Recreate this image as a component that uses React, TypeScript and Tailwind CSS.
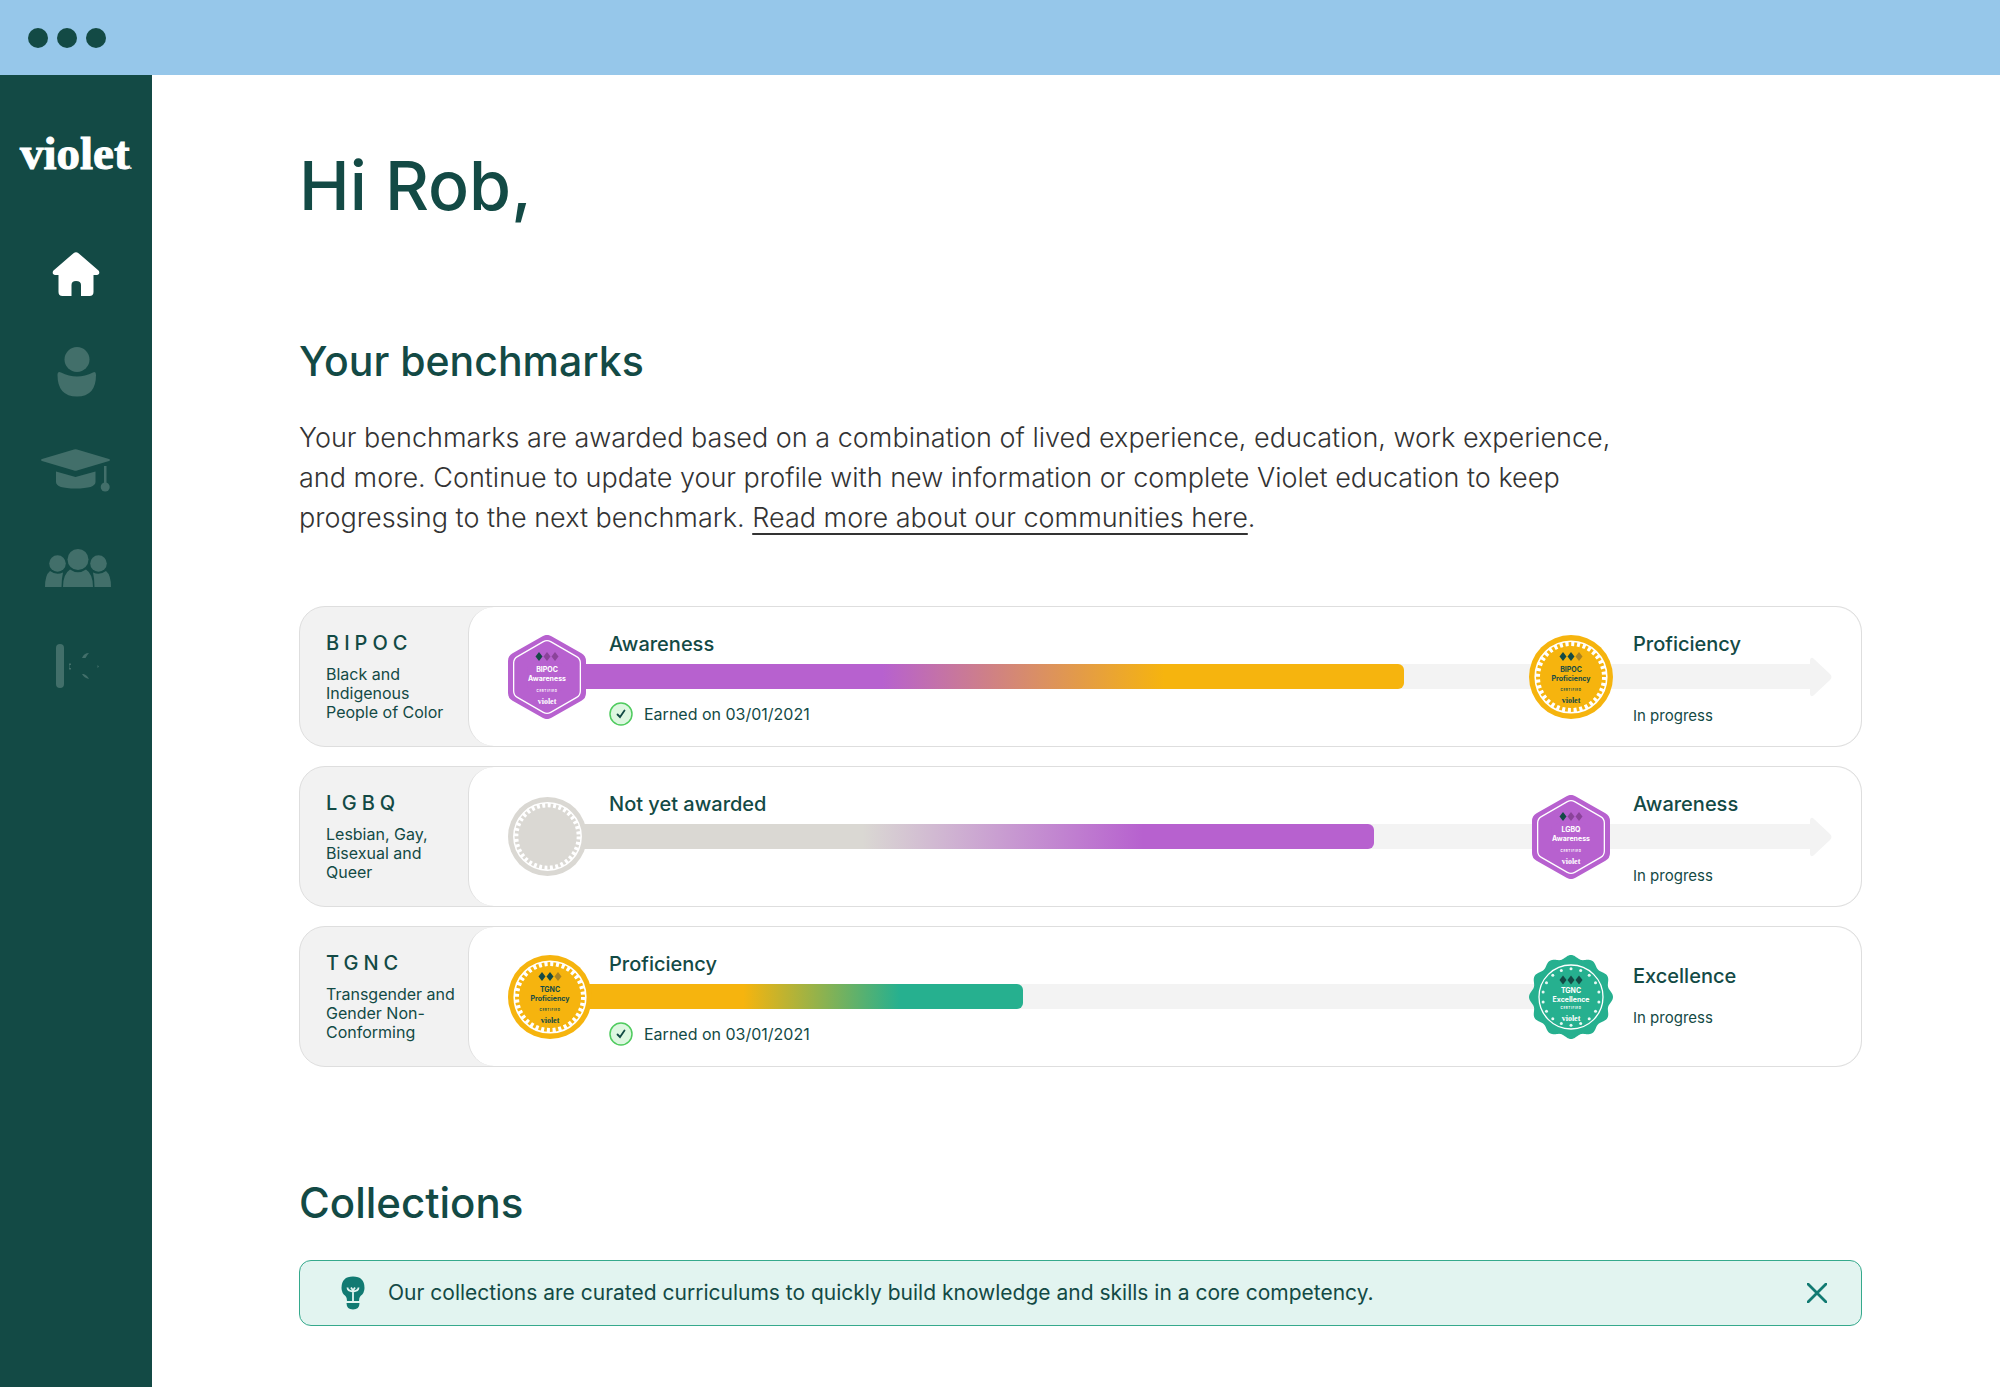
import type { ReactNode } from "react";

const sans = "font-['Inter','Liberation_Sans',sans-serif]";

type BadgeInfo = { kind: "awareness" | "proficiency" | "excellence" | "empty"; code?: string; label?: string };

type Row = {
  code: string;
  name: string;
  from: BadgeInfo;
  fromLabel: string;
  earned?: string;
  to: BadgeInfo;
  toLabel: string;
  progress: number;
  gradient: string;
  arrow: boolean;
};

const rows: Row[] = [
  {
    code: "BIPOC",
    name: "Black and Indigenous People of Color",
    from: { kind: "awareness", code: "BIPOC", label: "Awareness" },
    fromLabel: "Awareness",
    earned: "Earned on 03/01/2021",
    to: { kind: "proficiency", code: "BIPOC", label: "Proficiency" },
    toLabel: "Proficiency",
    progress: 67.8,
    gradient: "bg-[linear-gradient(90deg,#b761cf_39%,#f6b40e_72%)]",
    arrow: true,
  },
  {
    code: "LGBQ",
    name: "Lesbian, Gay, Bisexual and Queer",
    from: { kind: "empty" },
    fromLabel: "Not yet awarded",
    to: { kind: "awareness", code: "LGBQ", label: "Awareness" },
    toLabel: "Awareness",
    progress: 65.4,
    gradient: "bg-[linear-gradient(90deg,#dad8d3_38%,#b761cf_72%)]",
    arrow: true,
  },
  {
    code: "TGNC",
    name: "Transgender and Gender Non-Conforming",
    from: { kind: "proficiency", code: "TGNC", label: "Proficiency" },
    fromLabel: "Proficiency",
    earned: "Earned on 03/01/2021",
    to: { kind: "excellence", code: "TGNC", label: "Excellence" },
    toLabel: "Excellence",
    progress: 46.4,
    gradient: "bg-[linear-gradient(90deg,#f6b40e_41%,#26b08f_74%)]",
    arrow: false,
  },
];

function Diamonds({ y, colors }: { y: number; colors: string[] }) {
  return (
    <>
      {colors.map((c, i) => {
        const x = 34 + i * 8;
        return <path key={i} d={`M${x} ${y - 4.5}L${x + 3.5} ${y}L${x} ${y + 4.5}L${x - 3.5} ${y}Z`} fill={c} />;
      })}
    </>
  );
}

function BadgeText({
  code,
  label,
  color,
  y,
  footer,
}: {
  code?: string;
  label?: string;
  color: string;
  y: number;
  footer: number;
}) {
  return (
    <g fill={color} textAnchor="middle" fontFamily="Inter, sans-serif" fontWeight="700">
      <text x="42" y={y} fontSize="7">{code}</text>
      <text x="42" y={y + 9} fontSize="7">{label}</text>
      <text x="42" y={footer - 12} fontSize="3" letterSpacing="0.6">CERTIFIED</text>
      <text x="42" y={footer} fontSize="8" fontFamily="'Liberation Serif', serif">violet</text>
    </g>
  );
}

function Badge({ kind, code, label }: BadgeInfo) {
  if (kind === "awareness") {
    const inner = "M42 13L68 28V56L42 71L16 56V28Z";
    return (
      <svg viewBox="3 0 78 84" className="h-[84px] w-[78px]" role="img" aria-label={`${code} ${label}`}>
        <path d="M42 9L72 26V58L42 75L12 58V26Z" fill="#b761cf" stroke="#b761cf" strokeWidth="18" strokeLinejoin="round" />
        <path d={inner} fill="#b761cf" stroke="#fff" strokeWidth="16" strokeLinejoin="round" />
        <path d={inner} fill="#b761cf" stroke="#b761cf" strokeWidth="13.4" strokeLinejoin="round" />
        <Diamonds y={21.5} colors={["#134a45", "#8a4399", "#8a4399"]} />
        <BadgeText code={code} label={label} color="#fff" y={37} footer={69} />
      </svg>
    );
  }
  if (kind === "excellence") {
    const pts: string[] = [];
    for (let i = 0; i < 240; i++) {
      const a = (i / 240) * Math.PI * 2;
      const r = 40.2 + 1.8 * Math.cos(a * 12);
      pts.push(`${(42 + r * Math.sin(a)).toFixed(2)},${(42 - r * Math.cos(a)).toFixed(2)}`);
    }
    return (
      <svg viewBox="0 0 84 84" className="size-[84px]" role="img" aria-label={`${code} ${label}`}>
        <polygon points={pts.join(" ")} fill="#26b08f" />
        <circle cx="42" cy="42" r="32" fill="none" stroke="#fff" strokeWidth="1.3" />
        {Array.from({ length: 18 }, (_, i) => {
          const a = (i / 18) * Math.PI * 2;
          return <circle key={i} cx={42 + 28.3 * Math.sin(a)} cy={42 - 28.3 * Math.cos(a)} r="1.5" fill="#e8f8f3" />;
        })}
        <Diamonds y={25} colors={["#134a45", "#134a45", "#134a45"]} />
        <BadgeText code={code} label={label} color="#fff" y={38} footer={66} />
      </svg>
    );
  }
  const empty = kind === "empty";
  const color = empty ? "#dad8d3" : "#f6b40e";
  return (
    <svg
      viewBox="0 0 84 84"
      className={empty ? "size-[79px]" : "size-[84px]"}
      role="img"
      aria-label={empty ? "No badge" : `${code} ${label}`}
    >
      <circle cx="42" cy="42" r="42" fill={color} />
      <circle cx="42" cy="42" r="35.8" fill="none" stroke="#fff" strokeWidth="1.6" />
      <circle cx="42" cy="42" r="33.3" fill="none" stroke="#fff" strokeWidth="4.6" strokeDasharray="3.1 2.712" />
      {kind === "proficiency" && (
        <>
          <Diamonds y={21.5} colors={["#134a45", "#134a45", "#a88222"]} />
          <BadgeText code={code} label={label} color="#134a45" y={37} footer={68} />
        </>
      )}
    </svg>
  );
}

function BenchmarkRow({ row }: { row: Row }) {
  return (
    <li className="flex min-h-[141px] overflow-hidden rounded-[26px] border border-[#dedede] bg-[#f2f2f2]">
      <div className="flex w-[168px] shrink-0 flex-col justify-center gap-[10px] pl-[26px]">
        <h3 className="text-[20px] leading-6 font-medium tracking-[0.25em]">{row.code}</h3>
        <p className="w-[130px] text-[16px] leading-[19px]">{row.name}</p>
      </div>
      <div className="grid flex-1 rounded-[26px] border-l border-[#dedede] bg-white">
        <div className={`col-start-1 row-start-1 flex items-center pl-20 ${row.arrow ? "pr-[29px]" : "pr-[290px]"}`}>
          <div className="h-[25px] flex-1 bg-[#f3f3f3]">
            <div className={`h-full rounded-r-md ${row.gradient}`} style={{ width: `${row.progress}%` }} />
          </div>
          {row.arrow && (
            <svg viewBox="0 0 22 40" className="h-10 w-[22px]" aria-hidden="true">
              <path d="M0 3Q1 -1 4 2L20 17Q23 20 20 23L4 38Q1 41 0 37Z" fill="#f3f3f3" />
            </svg>
          )}
        </div>
        <div className="col-start-1 row-start-1 grid grid-cols-[101px_1fr_104px_228px] pl-[39px]">
          <div className="flex items-center">
            <Badge {...row.from} />
          </div>
          <div className="flex flex-col gap-[46px] pt-[25px]">
            <p className="text-[20px] leading-6 font-medium">{row.fromLabel}</p>
            {row.earned && (
              <p className="flex items-center gap-[11px] text-[16px] leading-6">
                <svg viewBox="0 0 24 24" className="size-6" fill="none" aria-hidden="true">
                  <circle cx="12" cy="12" r="11" fill="#ddf7e0" stroke="#4fcb5e" strokeWidth="1.5" />
                  <path d="M8.500 12.500L11 15L15.500 8.500" stroke="#134a45" strokeWidth="1.8" strokeLinecap="round" />
                </svg>
                {row.earned}
              </p>
            )}
          </div>
          <div className="flex w-[84px] items-center justify-center">
            <Badge {...row.to} />
          </div>
          <div className={row.arrow ? "flex flex-col gap-[48px] pt-[25px]" : "flex flex-col gap-[18px] pt-[37px]"}>
            <p className="text-[20px] leading-6 font-medium">{row.toLabel}</p>
            <p className="text-[15px] leading-6">In progress</p>
          </div>
        </div>
      </div>
    </li>
  );
}

function NavItem({ label, children }: { label: string; children: ReactNode }) {
  return (
    <a href="#" aria-label={label} className="flex h-[98px] w-full items-center justify-center">
      {children}
    </a>
  );
}

function Sidebar() {
  return (
    <aside className="flex w-[152px] shrink-0 flex-col items-center bg-[#134a45] pt-[51px]">
      <a
        href="#"
        className="font-['Liberation_Serif',serif] text-[47px] leading-[54px] font-bold text-white [-webkit-text-stroke:1px_white]"
      >
        violet<span className="text-[10px] [-webkit-text-stroke:0]">.</span>
      </a>
      <nav className="mt-8 flex w-full flex-col text-[#426f6a]">
        <NavItem label="Home">
          <svg viewBox="0 0 48 44" className="h-11 w-12" fill="#fff">
            <path d="M21.5 1.2Q24 -0.8 26.5 1.2L46.5 18.5Q47.8 20 47 21.8Q46.3 23 44.5 23H41.500V40Q41.500 44 37.500 44H29V33Q29 29 24 29Q19.500 29 19.500 33V44H10.500Q6.500 44 6.500 40V23H3.500Q1.700 23 1 21.800Q0.200 20 1.500 18.500Z" />
          </svg>
        </NavItem>
        <NavItem label="Profile">
          <svg viewBox="0 0 40 50" className="h-[50px] w-10" fill="currentColor">
            <circle cx="21" cy="12.500" r="12.500" />
            <path d="M1.500 28Q1.500 24 5 25.500Q13 29.500 21 29.500Q29 29.500 37 25.500Q40 24 40 28Q40 49.500 21 49.500Q1.500 49.500 1.500 28Z" />
          </svg>
        </NavItem>
        <NavItem label="Education">
          <svg viewBox="0 0 70 43" className="h-[43px] w-[70px]" fill="currentColor">
            <path d="M33 0.500Q34.500 0 36 0.500L68 10Q70 11 68 12L36 21.500Q34.500 22 33 21.500L1 12Q-1 11 1 10Z" />
            <path d="M15 22.500L34.500 28L54.500 22.500V33Q54.500 39.500 34.500 39.500Q15 39.500 15 33Z" />
            <rect x="63" y="17" width="2.500" height="18" />
            <circle cx="64.200" cy="38" r="4.500" />
          </svg>
        </NavItem>
        <NavItem label="Community">
          <svg viewBox="0 0 66 38" className="ml-1 h-[38px] w-[66px]" fill="currentColor">
            <circle cx="33" cy="10.500" r="10.500" />
            <circle cx="12.500" cy="14.500" r="8.300" />
            <circle cx="53.500" cy="14.500" r="8.300" />
            <path d="M18 38Q18 25 25 20.500Q33 26 41 20.500Q48 25 48 38Z" />
            <path d="M0 38Q0 26 5 22Q11 26.500 18 23.500Q16.500 30 16.500 38Z" />
            <path d="M66 38Q66 26 61 22Q55 26.500 48 23.500Q49.500 30 49.500 38Z" />
          </svg>
        </NavItem>
        <NavItem label="Log out">
          <svg viewBox="0 0 44 44" className="ml-1 h-11 w-11" fill="currentColor">
            <rect x="0" y="0" width="8" height="44" rx="4" />
            <path d="M26 14Q28 9 33 9Q31 11 29.500 14ZM26 30Q28 34 33 35Q31 31 27.500 30ZM13 19.500H15V21H13.500V24H15V25.500H13ZM41.500 21L43 22.500L41.500 24Z" />
          </svg>
        </NavItem>
      </nav>
    </aside>
  );
}

export default function App() {
  return (
    <div className={`flex min-h-screen flex-col bg-white text-[#134a45] ${sans}`}>
      <header className="flex h-[75px] items-center gap-[9px] bg-[#96c7ea] pl-7">
        <span className="size-5 rounded-full bg-[#134a45]" />
        <span className="size-5 rounded-full bg-[#134a45]" />
        <span className="size-5 rounded-full bg-[#134a45]" />
      </header>
      <div className="flex flex-1">
        <Sidebar />
        <main className="flex-1 pr-[138px] pl-[147px]">
          <h1 className="mt-[70px] text-[68px] leading-[80px] font-medium">Hi Rob,</h1>
          <section>
            <h2 className="mt-[111px] text-[41px] leading-[50px] font-medium">Your benchmarks</h2>
            <p className="mt-[32px] max-w-[1340px] text-[27px] leading-[40px] font-light text-[#333]">
              Your benchmarks are awarded based on a combination of lived experience, education, work experience, and
              more. Continue to update your profile with new information or complete Violet education to keep
              progressing to the next benchmark.{" "}
              <a href="#" className="underline decoration-2 underline-offset-[6px]">
                Read more about our communities here
              </a>
              .
            </p>
            <ul className="mt-[68px] flex flex-col gap-[19px]">
              {rows.map((r) => (
                <BenchmarkRow key={r.code} row={r} />
              ))}
            </ul>
          </section>
          <section>
            <h2 className="mt-[111px] text-[42px] leading-[50px] font-medium">Collections</h2>
            <div className="mt-[32px] flex h-[66px] items-center rounded-xl border border-[#35a98c] bg-[#e2f4f0] pr-[30px] pl-[41px]">
              <svg viewBox="0 0 24 34" className="h-[34px] w-6" fill="#117a72" aria-hidden="true">
                <path d="M12 0.500Q23.500 0.500 23.500 12Q23.500 17 19.500 20Q18 21.500 18 25H6Q6 21.500 4.500 20Q0.500 17 0.500 12Q0.500 0.500 12 0.500Z" />
                <path d="M5.500 27H18.500Q18.500 33.500 12 33.500Q5.500 33.500 5.500 27Z" />
                <path
                  d="M6.500 11.500Q6.500 15 12 15.500Q17.500 15 17.500 11.500M10 11.500L12 14.500L14 11.500M12 15V26"
                  stroke="#e2f4f0"
                  strokeWidth="1.800"
                  fill="none"
                />
              </svg>
              <p className="ml-[23px] flex-1 text-[21px] leading-7">
                Our collections are curated curriculums to quickly build knowledge and skills in a core competency.
              </p>
              <button type="button" aria-label="Dismiss" className="p-1">
                <svg viewBox="0 0 20 20" className="size-5" fill="none" aria-hidden="true">
                  <path d="M1 1L19 19M19 1L1 19" stroke="#117a72" strokeWidth="2.800" strokeLinecap="round" />
                </svg>
              </button>
            </div>
          </section>
        </main>
      </div>
    </div>
  );
}
